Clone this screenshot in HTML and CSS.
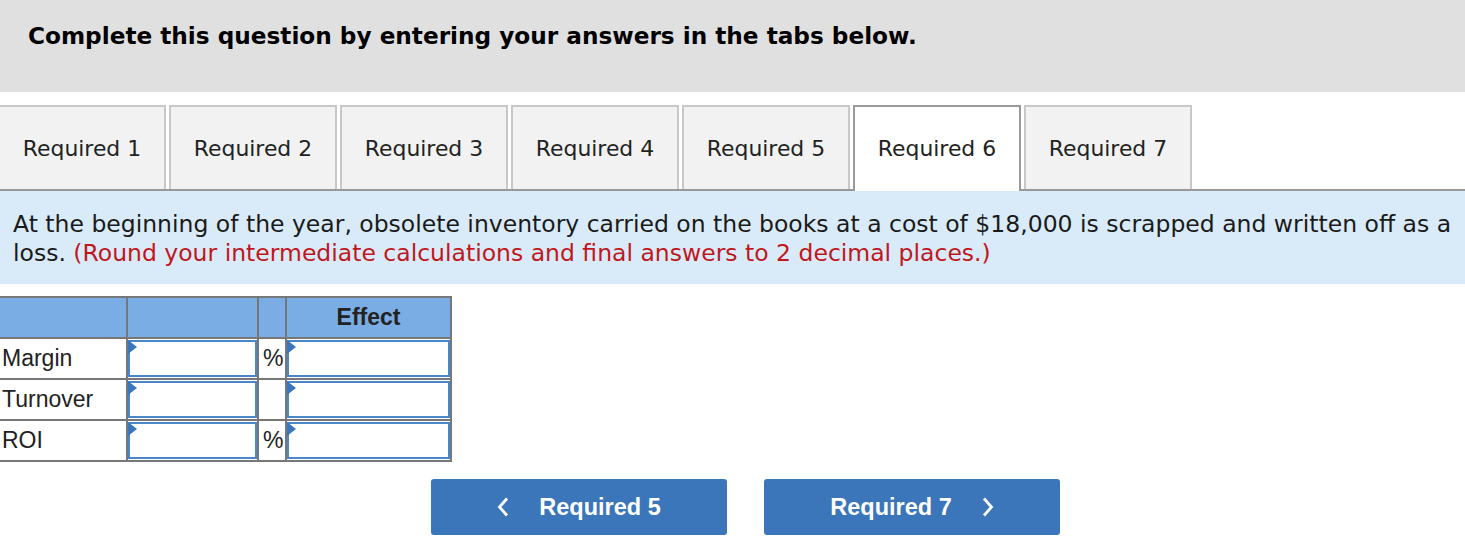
FILE: index.html
```html
<!DOCTYPE html>
<html>
<head>
<meta charset="utf-8">
<link rel="stylesheet" href="styles.css">
</head>
<body>
<div class="header">
  <h1 class="header-title">Complete this question by entering your answers in the tabs below.</h1>
</div>
<div class="tabs">
  <div class="tab">Required 1</div>
  <div class="tab">Required 2</div>
  <div class="tab">Required 3</div>
  <div class="tab">Required 4</div>
  <div class="tab">Required 5</div>
  <div class="tab tab-active">Required 6</div>
  <div class="tab">Required 7</div>
</div>
<div class="prompt">
  At the beginning of the year, obsolete inventory carried on the books at a cost of $18,000 is scrapped and written off as a loss. <span class="prompt-note">(Round your intermediate calculations and final answers to 2 decimal places.)</span>
</div>
<table class="grid">
  <tr class="grid-head">
    <th class="col-label"></th>
    <th class="col-input"></th>
    <th class="col-unit"></th>
    <th class="col-effect">Effect</th>
  </tr>
  <tr>
    <td class="cell-label">Margin</td>
    <td class="cell-input"><div class="field"></div></td>
    <td class="cell-unit">%</td>
    <td class="cell-input"><div class="field"></div></td>
  </tr>
  <tr>
    <td class="cell-label">Turnover</td>
    <td class="cell-input"><div class="field"></div></td>
    <td class="cell-unit"></td>
    <td class="cell-input"><div class="field"></div></td>
  </tr>
  <tr>
    <td class="cell-label">ROI</td>
    <td class="cell-input"><div class="field"></div></td>
    <td class="cell-unit">%</td>
    <td class="cell-input"><div class="field"></div></td>
  </tr>
</table>
<div class="nav">
  <button class="nav-btn">
    <svg class="chev" width="12" height="20" viewBox="0 0 12 20"><path d="M10 1.5 L2.5 10 L10 18.5" fill="none" stroke="#fff" stroke-width="2.8"/></svg>
    <span>Required 5</span>
  </button>
  <button class="nav-btn">
    <span>Required 7</span>
    <svg class="chev" width="12" height="20" viewBox="0 0 12 20"><path d="M2 1.5 L9.5 10 L2 18.5" fill="none" stroke="#fff" stroke-width="2.8"/></svg>
  </button>
</div>
</body>
</html>
```
FILE: styles.css
```css
* { box-sizing: border-box; }
body {
  margin: 0;
  background: #fff;
  font-family: "DejaVu Sans", Verdana, sans-serif;
  color: #111;
  overflow: hidden;
}
.header {
  background: #e0e0e0;
  height: 92px;
  padding: 21px 0 0 28px;
}
.header-title {
  margin: 0;
  font-size: 23.2px;
  font-weight: bold;
  line-height: 30px;
  color: #000;
}
.tabs {
  box-sizing: content-box;
  display: flex;
  align-items: flex-start;
  gap: 3px;
  margin: 13px 0 0 -2px;
  border-bottom: 2px solid #999;
  height: 84px;
}
.tab {
  width: 168px;
  height: 84px;
  background: #f2f2f2;
  border: 2px solid #c8c8c8;
  border-bottom: none;
  display: flex;
  align-items: center;
  justify-content: center;
  font-size: 21.9px;
  color: #222;
}
.tab-active {
  background: #fff;
  border-color: #999;
  height: 86px;
  padding-bottom: 2px;
  margin-bottom: -2px;
  position: relative;
}
.prompt {
  background: #d9ebf9;
  padding: 19px 13px 16px 13px;
  font-size: 23.5px;
  line-height: 29px;
  color: #1a1a1a;
}
.prompt-note { color: #c0171d; }
.grid {
  border-collapse: collapse;
  margin: 12px 0 0 -2px;
  font-family: "Liberation Sans", Arial, sans-serif;
  font-size: 23px;
  color: #222;
}
.grid th, .grid td {
  border: 2px solid #777;
  height: 41px;
  padding: 0;
}
.grid-head th {
  background: #7aade3;
  font-weight: bold;
  text-align: center;
  color: #222;
  vertical-align: middle;
}
.col-label { width: 128px; }
.col-input { width: 131px; }
.col-unit { width: 28px; }
.col-effect { width: 165px; }
.grid .cell-label {
  padding: 0 0 0 2px;
  text-align: left;
}
.grid .cell-unit { text-align: left; padding-left: 4px; }
.grid .cell-input { padding: 1px 0; }
.field {
  position: relative;
  height: 37px;
  border: 2px solid #4a86c8;
  background: #fff;
}
.field::before {
  content: "";
  position: absolute;
  left: -2px;
  top: -2px;
  border-top: 7px solid transparent;
  border-bottom: 7px solid transparent;
  border-left: 9px solid #3a76b9;
}
.nav {
  display: flex;
  justify-content: center;
  gap: 37px;
  padding-left: 26px;
  margin-top: 17px;
}
.nav-btn {
  width: 296px;
  height: 56px;
  background: #3a76b9;
  border: none;
  border-radius: 3px;
  color: #fff;
  font-family: "Liberation Sans", Arial, sans-serif;
  font-weight: bold;
  font-size: 23.5px;
  display: flex;
  align-items: center;
  justify-content: center;
  gap: 30px;
  padding: 0;
}
.chev { display: block; }
```
